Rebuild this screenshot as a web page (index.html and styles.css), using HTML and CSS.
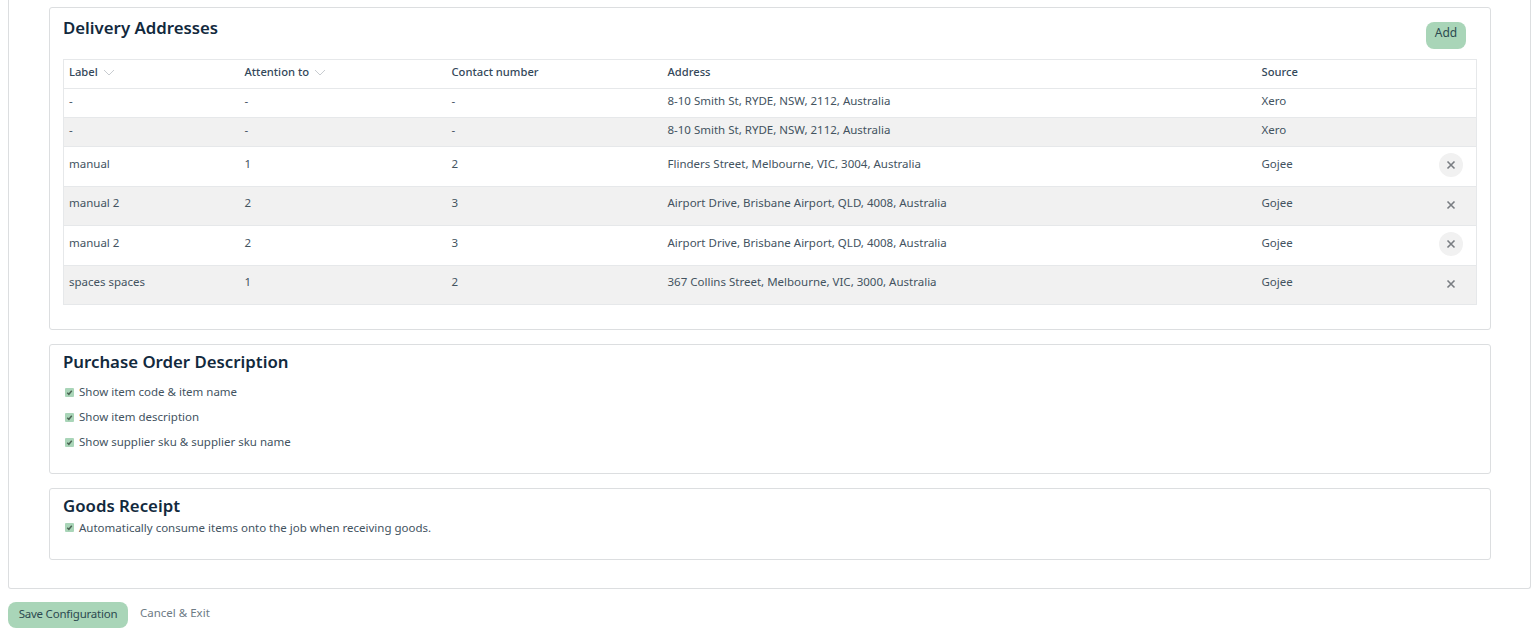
FILE: index.html
```html
<!DOCTYPE html>
<html lang="en">
<head>
<meta charset="utf-8">
<title>Configuration</title>
<link rel="stylesheet" href="styles.css">
</head>
<body>
<main class="outer">
  <section class="card card-delivery">
    <div class="card-head">
      <h2 class="card-title">Delivery Addresses</h2>
      <button class="btn btn-add" type="button">Add</button>
    </div>
    <table class="table">
      <colgroup>
        <col class="col-label"><col class="col-attn"><col class="col-contact"><col class="col-address"><col class="col-source"><col>
      </colgroup>
      <thead>
        <tr>
          <th>Label <svg class="sort" viewBox="0 0 12 7"><path d="M1 1l5 5 5-5"/></svg></th>
          <th>Attention to <svg class="sort" viewBox="0 0 12 7"><path d="M1 1l5 5 5-5"/></svg></th>
          <th>Contact number</th>
          <th>Address</th>
          <th>Source</th>
          <th></th>
        </tr>
      </thead>
      <tbody>
        <tr class="short"><td>-</td><td>-</td><td>-</td><td>8-10 Smith St, RYDE, NSW, 2112, Australia</td><td>Xero</td><td></td></tr>
        <tr class="short alt"><td>-</td><td>-</td><td>-</td><td>8-10 Smith St, RYDE, NSW, 2112, Australia</td><td>Xero</td><td></td></tr>
        <tr class="tall"><td>manual</td><td>1</td><td>2</td><td>Flinders Street, Melbourne, VIC, 3004, Australia</td><td>Gojee</td><td class="act"><button class="x x-on" type="button" aria-label="Remove"><svg viewBox="0 0 10 10"><path d="M1.5 1.5l7 7M8.5 1.5l-7 7"/></svg></button></td></tr>
        <tr class="tall alt"><td>manual 2</td><td>2</td><td>3</td><td>Airport Drive, Brisbane Airport, QLD, 4008, Australia</td><td>Gojee</td><td class="act"><button class="x" type="button" aria-label="Remove"><svg viewBox="0 0 10 10"><path d="M1.5 1.5l7 7M8.5 1.5l-7 7"/></svg></button></td></tr>
        <tr class="tall"><td>manual 2</td><td>2</td><td>3</td><td>Airport Drive, Brisbane Airport, QLD, 4008, Australia</td><td>Gojee</td><td class="act"><button class="x x-on" type="button" aria-label="Remove"><svg viewBox="0 0 10 10"><path d="M1.5 1.5l7 7M8.5 1.5l-7 7"/></svg></button></td></tr>
        <tr class="tall alt"><td>spaces spaces</td><td>1</td><td>2</td><td>367 Collins Street, Melbourne, VIC, 3000, Australia</td><td>Gojee</td><td class="act"><button class="x" type="button" aria-label="Remove"><svg viewBox="0 0 10 10"><path d="M1.5 1.5l7 7M8.5 1.5l-7 7"/></svg></button></td></tr>
      </tbody>
    </table>
  </section>

  <section class="card card-po">
    <h2 class="card-title">Purchase Order Description</h2>
    <ul class="checks">
      <li class="check"><span class="box"><svg viewBox="0 0 10 10"><path d="M2.5 5.2l1.8 1.8 3.2-4"/></svg></span>Show item code &amp; item name</li>
      <li class="check"><span class="box"><svg viewBox="0 0 10 10"><path d="M2.5 5.2l1.8 1.8 3.2-4"/></svg></span>Show item description</li>
      <li class="check"><span class="box"><svg viewBox="0 0 10 10"><path d="M2.5 5.2l1.8 1.8 3.2-4"/></svg></span>Show supplier sku &amp; supplier sku name</li>
    </ul>
  </section>

  <section class="card card-goods">
    <h2 class="card-title">Goods Receipt</h2>
    <div class="check check-single"><span class="box"><svg viewBox="0 0 10 10"><path d="M2.5 5.2l1.8 1.8 3.2-4"/></svg></span>Automatically consume items onto the job when receiving goods.</div>
  </section>
</main>
<footer class="actions">
  <button class="btn btn-save" type="button">Save Configuration</button>
  <a class="cancel" href="#">Cancel &amp; Exit</a>
</footer>
</body>
</html>
```
FILE: styles.css
```css
* { box-sizing: border-box; }
html, body { margin: 0; padding: 0; }
body {
  height: 632px;
  overflow: hidden;
  background: #fff;
  font-family: "Noto Sans", "Open Sans", sans-serif;
  font-size: 11.5px;
  color: #43535f;
}
.outer {
  margin: 0 5px 0 8px;
  height: 589px;
  padding: 7px 39px 0 40px;
  border: 1px solid #dcdee0;
  border-top: 0;
  border-radius: 0 0 3px 3px;
}
.card {
  border: 1px solid #dcdee0;
  border-radius: 3px;
  padding: 0 13px;
  margin-bottom: 14px;
}
.card-delivery { height: 323px; }
.card-po { height: 130px; }
.card-goods { height: 72px; margin-bottom: 0; }
.card-head {
  display: flex;
  justify-content: space-between;
  height: 51px;
}
.card-title {
  margin: 0;
  font-size: 16.8px;
  line-height: 22px;
  font-weight: 600;
  color: #12293d;
}
.card-delivery .card-title { margin-top: 9px; }
.card-po .card-title, .card-goods .card-title { margin-top: 6px; }
.btn {
  border: 0;
  border-radius: 8px;
  background: #a9d5b8;
  color: #2c4a50;
  font: inherit;
  padding: 0;
}
.btn-add {
  width: 40px;
  height: 27px;
  margin: 14px 11px 0 0;
  font-size: 12px;
  padding-bottom: 7px;
}
.table {
  width: 100%;
  table-layout: fixed;
  border-collapse: collapse;
  border: 1px solid #e6e8ea;
}
.col-label { width: 175px; }
.col-attn { width: 207px; }
.col-contact { width: 216px; }
.col-address { width: 594px; }
.col-source { width: 170px; }
.table th, .table td {
  padding: 0 0 0 6px;
  text-align: left;
  font-weight: 400;
  border-bottom: 1px solid #e6e8ea;
  white-space: nowrap;
}
.table th:first-child, .table td:first-child { padding-left: 5px; }
.table th { height: 29px; padding-bottom: 5px; font-size: 11.2px; font-weight: 500; color: #34485a; }
.short td { height: 29px; padding-bottom: 5px; }
.tall td { height: 39.5px; padding-bottom: 6px; }
.alt td { background: #f1f1f1; }
.sort { width: 12px; height: 7px; margin-left: 2px; }
.sort path { fill: none; stroke: #c8ccd0; stroke-width: 1; }
.tall td.act { padding: 0 13px 2px 0; text-align: right; }
.x {
  display: inline-flex;
  align-items: center;
  justify-content: center;
  width: 24px;
  height: 24px;
  border: 0;
  border-radius: 50%;
  background: transparent;
  padding: 0;
  vertical-align: middle;
}
.x-on { background: #f1f1f1; }
.x svg { width: 10px; height: 10px; }
.x path { fill: none; stroke: #797d82; stroke-width: 1.6; }
.checks { list-style: none; margin: 6px 0 0 2px; padding: 0; }
.check {
  display: flex;
  align-items: center;
  height: 25px;
}
.check-single { margin: -1px 0 0 2px; height: 22px; }
.box {
  width: 9px;
  height: 9px;
  margin-right: 5px;
  margin-top: 1px;
  border-radius: 1px;
  background: #a9d5b8;
  flex: none;
}
.box svg { display: block; width: 9px; height: 9px; }
.box path { fill: none; stroke: #4a6352; stroke-width: 1.6; }
.actions {
  display: flex;
  align-items: center;
  gap: 12px;
  margin: 13px 0 0 8px;
}
.btn-save {
  width: 120px;
  height: 26px;
  font-size: 11.5px;
  letter-spacing: -0.22px;
  padding-bottom: 3px;
}
.cancel {
  color: #6e7b85;
  font-size: 11.5px;
  margin-top: -5px;
  text-decoration: none;
}
```
